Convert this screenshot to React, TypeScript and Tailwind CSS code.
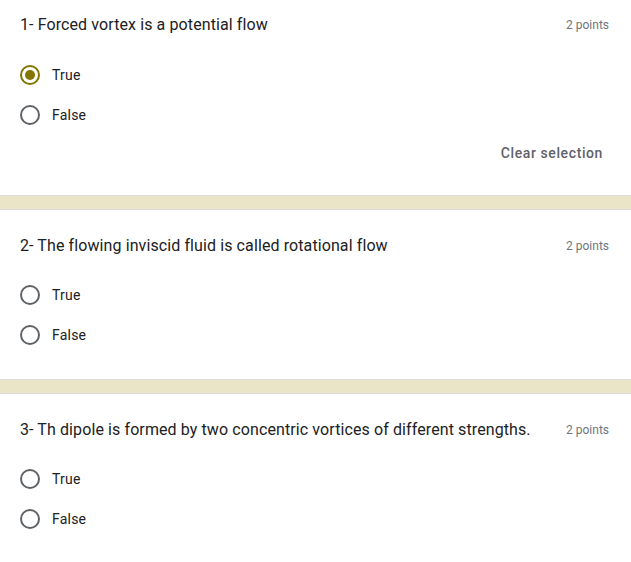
import React from "react";

type Q = { title: string; selected?: number; clear?: boolean; first?: boolean };

const questions: Q[] = [
  { title: "1- Forced vortex is a potential flow", selected: 0, clear: true, first: true },
  { title: "2- The flowing inviscid fluid is called rotational flow" },
  { title: "3- Th dipole is formed by two concentric vortices of different strengths." },
];

function Radio({ checked }: { checked: boolean }) {
  return checked ? (
    <span className="flex h-5 w-5 items-center justify-center rounded-full border-2 border-[#817600]">
      <span className="h-[10px] w-[10px] rounded-full bg-[#817600]" />
    </span>
  ) : (
    <span className="block h-5 w-5 rounded-full border-2 border-[#5f6368]" />
  );
}

function Card({ q }: { q: Q }) {
  return (
    <div
      className={
        "bg-white border-b border-[#dadce0] pl-5 pr-[22px] pb-[24px] " +
        (q.first ? "pt-[13px]" : "pt-[24px] border-t")
      }
    >
      <div className="flex items-center justify-between gap-4">
        <div className="text-[16px] leading-6 text-[#202124] tracking-[0.1px]">{q.title}</div>
        <div className="shrink-0 text-[12px] leading-6 text-[#70757a]">2 points</div>
      </div>
      <div className={(q.first ? "mt-[18px]" : "mt-[17px]") + " flex flex-col"}>
        {["True", "False"].map((o, i) => (
          <div key={o} className="flex h-10 items-center gap-3">
            <Radio checked={q.selected === i} />
            <span className="text-[14px] text-[#202124] tracking-[0.2px]">{o}</span>
          </div>
        ))}
      </div>
      {q.clear && (
        <div className="flex justify-end">
          <button className="h-9 pl-2 pr-[6px] text-[14px] font-medium text-[#5f6368] tracking-[0.6px]">
            Clear selection
          </button>
        </div>
      )}
    </div>
  );
}

export default function App() {
  return (
    <div
      className="min-h-[562px] w-[631px] bg-[#e9e5c6] flex flex-col gap-[13px] overflow-hidden"
      style={{ fontFamily: "Roboto, 'Liberation Sans', sans-serif" }}
    >
      {questions.map((q, i) => (
        <Card key={i} q={q} />
      ))}
    </div>
  );
}
